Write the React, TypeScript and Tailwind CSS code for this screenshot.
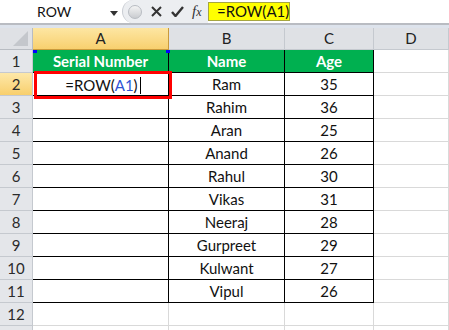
import React from "react";

const names = ["Ram", "Rahim", "Aran", "Anand", "Rahul", "Vikas", "Neeraj", "Gurpreet", "Kulwant", "Vipul"];
const ages = [35, 36, 25, 26, 30, 31, 28, 29, 27, 26];

const font = { fontFamily: "Lato, 'Open Sans', sans-serif" };

function RowHead({ n, active }: { n?: number; active?: boolean }) {
  return (
    <div
      className={`h-[23px] flex items-center justify-center text-[15px] text-[#2b2b2b] border-r border-b border-[#c5c9cf] ${
        active ? "bg-gradient-to-b from-[#fde8a8] to-[#f8cf6c]" : "bg-[#e4e6ea]"
      }`}
    >
      {n}
    </div>
  );
}

export default function App() {
  return (
    <div className="w-[449px] h-[330px] bg-white overflow-hidden relative" style={font}>
      {/* formula bar */}
      <div className="h-[25px] flex items-stretch bg-white border-b-2 border-[#b9bcc2]">
        <div className="w-[122px] flex items-center relative">
          <span className="ml-[37px] text-[14px] text-[#111]">ROW</span>
          <svg className="absolute left-[110px] top-[11px]" width="8" height="5" viewBox="0 0 8 5">
            <path d="M0 0H8L4 5Z" fill="#333" />
          </svg>
        </div>
        <div className="w-[86px] flex items-center bg-[#eceef1] rounded-l-full border-l border-[#c8ccd2]">
          <div className="ml-[5px] w-[14px] h-[14px] rounded-full bg-gradient-to-b from-[#f4f4f4] to-[#c9ccd0] border border-[#b8bcc2]" />
          <svg className="ml-[9px]" width="11" height="11" viewBox="0 0 11 11">
            <path d="M1 1L10 10M10 1L1 10" stroke="#333" strokeWidth="2" />
          </svg>
          <svg className="ml-[9px]" width="13" height="11" viewBox="0 0 13 11">
            <path d="M1 6L4.5 10L12 1" stroke="#333" strokeWidth="2.4" fill="none" />
          </svg>
          <span className="ml-[8px] text-[15px] italic text-[#333]" style={{ fontFamily: "'Liberation Serif', serif" }}>
            f<span className="text-[12px]">x</span>
          </span>
        </div>
        <div className="my-[2px] w-[82px] bg-[#ffff00] border border-[#a6a640] flex items-center">
          <span className="ml-[8px] text-[15px] text-[#111]">=ROW(A1)</span>
        </div>
        <div className="flex-1" />
      </div>
      <div className="h-[3px] bg-[#dde3ec]" />

      {/* sheet */}
      <div className="grid grid-cols-[33px_136px_116px_89px_75px]">
        {/* column headers */}
        <div className="h-[22px] bg-[#dfe1e5] border-r border-b border-[#b8bcc2] relative">
          <svg className="absolute right-[4px] bottom-[3px]" width="15" height="15" viewBox="0 0 15 15">
            <path d="M15 0V15H0Z" fill="#c4c7cc" />
          </svg>
        </div>
        <div className="h-[22px] bg-gradient-to-b from-[#fde6a2] to-[#f8d06e] border-r border-b border-[#c99a3c] flex items-center justify-center text-[15px] text-[#222]">
          A
        </div>
        {["B", "C", "D"].map((c) => (
          <div
            key={c}
            className="h-[22px] bg-[#dfe1e5] border-r border-b border-[#c5c9cf] flex items-center justify-center text-[15px] text-[#222]"
          >
            {c}
          </div>
        ))}

        {/* row 1 */}
        <RowHead n={1} />
        <div className="h-[23px] bg-[#00b050] border-b border-r border-black flex items-center justify-center text-[15px] font-bold text-white relative">
          Serial Number
          <div className="absolute left-0 top-0 w-[4px] h-[3px] bg-[#0000ff]" />
          <div className="absolute right-[-2px] top-0 w-[4px] h-[3px] bg-[#0000ff]" />
        </div>
        <div className="h-[23px] bg-[#00b050] border-b border-r border-black flex items-center justify-center text-[15px] font-bold text-white">
          Name
        </div>
        <div className="h-[23px] bg-[#00b050] border-b border-r border-black flex items-center justify-center text-[15px] font-bold text-white">
          Age
        </div>
        <div className="h-[23px] border-b border-r border-[#d9d9d9]" />

        {names.map((name, i) => {
          const r = i + 2;
          return (
            <React.Fragment key={r}>
              <RowHead n={r} active={r === 2} />
              {r === 2 ? (
                <div className="h-[23px] border-b border-r border-black relative">
                  <div className="absolute left-[1px] top-[-2px] w-[138px] h-[28px] border-[3px] border-[#ff0000] z-10 flex items-center justify-center text-[15px] text-[#111]">
                    <span>
                      =ROW(<span className="text-[#2f55d4]">A1</span>)
                    </span>
                    <span className="ml-[2px] w-px h-[17px] bg-black" />
                  </div>
                </div>
              ) : (
                <div className="h-[23px] border-b border-r border-black" />
              )}
              <div className="h-[23px] border-b border-r border-black flex items-center justify-center text-[15px] text-[#111]">
                {name}
              </div>
              <div className="h-[23px] border-b border-r border-black flex items-center justify-center text-[15px] text-[#111]">
                {ages[i]}
              </div>
              <div className="h-[23px] border-b border-r border-[#d9d9d9]" />
            </React.Fragment>
          );
        })}

        {/* row 12 */}
        <RowHead n={12} />
        <div className="h-[23px] border-b border-r border-[#d9d9d9]" />
        <div className="h-[23px] border-b border-r border-[#d9d9d9]" />
        <div className="h-[23px] border-b border-r border-[#d9d9d9]" />
        <div className="h-[23px] border-b border-r border-[#d9d9d9]" />
        <RowHead />
        <div className="h-[23px] border-r border-[#d9d9d9]" />
        <div className="h-[23px] border-r border-[#d9d9d9]" />
        <div className="h-[23px] border-r border-[#d9d9d9]" />
        <div className="h-[23px] border-r border-[#d9d9d9]" />
      </div>
    </div>
  );
}
